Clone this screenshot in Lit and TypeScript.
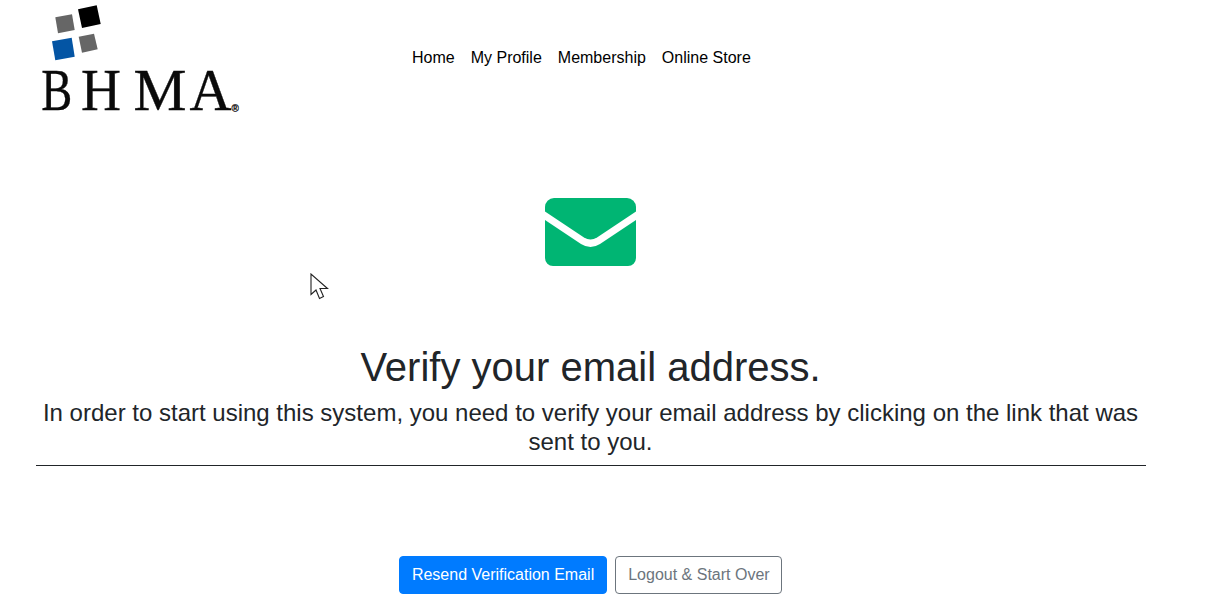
import { LitElement, html, css } from "lit";
import { customElement } from "lit/decorators.js";

@customElement("app-root")
export class AppRoot extends LitElement {
  static styles = css`
    :host { display: block; font-family: "Liberation Sans", Arial, sans-serif; color: #212529; background: #fff; height: 610px; overflow: hidden; position: relative; }
    .header { display: flex; align-items: flex-start; height: 115px; padding-left: 40px; }
    .logo { display: block; width: 204px; height: 125px; flex: none; }
    .logo text { font-family: "Liberation Serif", serif; fill: #0a0a0a; stroke: #0a0a0a; stroke-width: 0.35; }
    .logo .reg { font-family: "Liberation Sans", sans-serif; stroke-width: 0.2; }
    nav { display: flex; margin-left: 160px; margin-top: 46px; }
    nav a { padding: 0 8px; font-size: 16px; line-height: 24px; color: #000; text-decoration: none; }
    main { width: 1110px; margin-left: 36px; display: flex; flex-direction: column; align-items: center; text-align: center; }
    .mail { display: block; width: 91px; height: 68px; margin: 83px 1px 0 0; }
    h1 { margin: 77px 1px 0 0; font-size: 40px; line-height: 48px; font-weight: 400; }
    p { box-sizing: border-box; margin: 7px 0 0; padding-right: 1px; font-size: 24px; line-height: 29px; width: 100%; }
    hr { width: 100%; margin: 9px 0 0; border: 0; border-top: 1px solid #212529; }
    .actions { display: flex; gap: 8px; margin: 90px 1px 0 0; }
    .btn { box-sizing: border-box; height: 38px; padding: 0 12px; border: 1px solid; border-radius: 4px; font: 16px/36px "Liberation Sans", Arial, sans-serif; }
    .primary { background: #007bff; border-color: #007bff; color: #fff; }
    .secondary { background: #fff; border-color: #6c757d; color: #6c757d; padding-right: 11.5px; }
    .cursor { position: absolute; left: 310px; top: 273px; width: 19px; height: 28px; }
  `;

  render() {
    return html`
      <div class="header">
        <svg class="logo" viewBox="0 0 204 125" aria-label="BHMA">
          <polygon points="38,9.3 56.7,5.3 60.7,24 42,28" fill="#000"/>
          <polygon points="15.3,17.3 32,14.3 34.7,30 18,33.3" fill="#666"/>
          <polygon points="12,41.3 31.7,37.7 34.7,56.7 15.3,60.3" fill="#0455a4"/>
          <polygon points="38.7,36.7 54,33.7 57.7,49.3 42,52.7" fill="#666"/>
          <text y="110" font-size="59" x="1.2" textLength="31" lengthAdjust="spacingAndGlyphs">B</text>
          <text y="110" font-size="59" x="41" textLength="40" lengthAdjust="spacingAndGlyphs">H</text>
          <text y="110" font-size="59" x="93.5" textLength="53" lengthAdjust="spacingAndGlyphs">M</text>
          <text y="110" font-size="59" x="149.5" textLength="42" lengthAdjust="spacingAndGlyphs">A</text>
          <text class="reg" y="112" font-size="10" font-weight="700" x="191.5">®</text>
        </svg>
        <nav>
          <a href="#">Home</a>
          <a href="#">My Profile</a>
          <a href="#">Membership</a>
          <a href="#">Online Store</a>
        </nav>
      </div>
      <main>
        <svg class="mail" viewBox="0 0 91 68">
          <path fill="#00b573" d="M9 0H82A9 9 0 0 1 91 9V13.5L52 39.5Q45.5 43.5 39 39.5L0 13.5V9A9 9 0 0 1 9 0Z"/>
          <path fill="#00b573" d="M0 22L36 46Q45.5 52 55 46L91 22V60A8 8 0 0 1 83 68H8A8 8 0 0 1 0 60Z"/>
        </svg>
        <h1>Verify your email address.</h1>
        <p>In order to start using this system, you need to verify your email address by clicking on the link that was sent to you.</p>
        <hr />
        <div class="actions">
          <button class="btn primary">Resend Verification Email</button>
          <button class="btn secondary">Logout &amp; Start Over</button>
        </div>
      </main>
      <svg class="cursor" viewBox="0 0 19 28">
        <path d="M1 1V21.5L6 17L9.5 25.5L13.5 23.5L10 15.5H17.5Z" fill="#fff" stroke="#222" stroke-width="1.1" stroke-linejoin="miter"/>
      </svg>
    `;
  }
}
